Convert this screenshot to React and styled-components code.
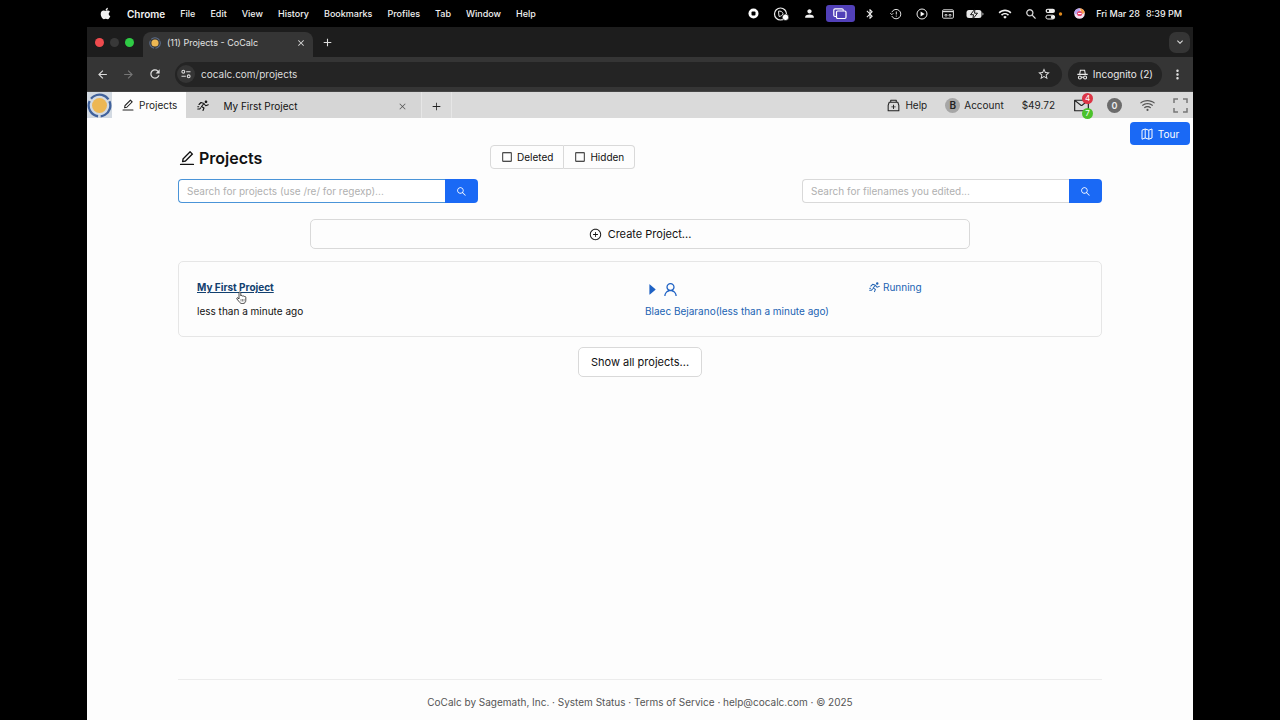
import React from "react";
import styled, { createGlobalStyle } from "styled-components";
import { FaApple } from "react-icons/fa";
import {
  AiOutlineEdit,
  AiOutlineMedicineBox,
  AiOutlineMail,
  AiOutlineWifi,
  AiOutlineSearch,
  AiOutlineUser,
  AiFillCaretRight,
  AiOutlinePlusCircle,
  AiOutlineBorder,
  AiOutlineClose,
  AiOutlinePlus,
} from "react-icons/ai";
import {
  MdArrowBack,
  MdArrowForward,
  MdRefresh,
  MdStarBorder,
  MdMoreVert,
  MdClose,
  MdAdd,
  MdPerson,
  MdBluetooth,
  MdWifi,
  MdKeyboardArrowDown,
} from "react-icons/md";

const menus = ["File", "Edit", "View", "History", "Bookmarks", "Profiles", "Tab", "Window", "Help"];

const RunIcon = ({ size }) => (
  <svg width={size} height={size} viewBox="0 0 24 24" fill="none" stroke="currentColor" strokeWidth="2.200" strokeLinecap="round" strokeLinejoin="round">
    <circle cx="18" cy="3.500" r="1.600" fill="currentColor" />
    <path d="M4 9l4-4 6 2-5 6 5 3-2 5M14.500 8l3 3.500 5-2M7.500 15.500L5.500 18H1.500M1.500 13.500h2" />
  </svg>
);

const LogoIcon = ({ size, ring }) => (
  <svg width={size} height={size} viewBox="0 0 24 24" fill="none">
    <circle cx="12" cy="12" r="7.200" fill="#edb753" />
    <circle cx="12" cy="12" r="10.400" stroke={ring} strokeWidth="2.200" strokeDasharray="19.300 2.480" strokeDashoffset="-1.240" transform="rotate(-30 12 12)" />
  </svg>
);

const StopIcon = () => (
  <svg width="11" height="11" viewBox="0 0 11 11">
    <circle cx="5.500" cy="5.500" r="5" fill="#fff" />
    <rect x="3.500" y="3.500" width="4" height="4" rx="1" fill="#000" />
  </svg>
);

const CastIcon = () => (
  <svg width="16" height="14" viewBox="0 0 16 14" fill="none" stroke="#eee">
    <circle cx="7.500" cy="7" r="6" strokeWidth="1.200" />
    <path d="M5.500 4.200c2-.500 4 .500 4.500 2.500-.700 1.700-2.200 2.700-4 2.700z" />
    <circle cx="12.500" cy="10.300" r="3.200" fill="#fff" stroke="#000" strokeWidth=".6" />
  </svg>
);

const ScreensIcon = () => (
  <svg width="14" height="12" viewBox="0 0 14 12" fill="none" stroke="#fff" strokeWidth="1.200">
    <path d="M3.500 8.500H2a1.200 1.200 0 0 1-1.200-1.200V2A1.200 1.200 0 0 1 2 .8h7a1.200 1.200 0 0 1 1.200 1.200v.8" />
    <rect x="3.500" y="3" width="9.500" height="7.500" rx="1.200" />
  </svg>
);

const TimeIcon = () => (
  <svg width="12" height="12" viewBox="0 0 12 12" fill="none" stroke="#ddd">
    <path d="M1.800 4.200A4.700 4.700 0 1 1 1.800 8" />
    <path d="M.3 5.200l1.500 1.500 1.500-1.500M6.300 3.500v3M6.300 7.600v1" />
  </svg>
);

const PlayIcon = () => (
  <svg width="12" height="12" viewBox="0 0 12 12" fill="none">
    <circle cx="6" cy="6" r="5" stroke="#eee" />
    <path d="M4.600 3.600L8.600 6l-4 2.400z" fill="#fff" />
  </svg>
);

const PanelIcon = () => (
  <svg width="12" height="10" viewBox="0 0 12 10" fill="none" stroke="#ddd">
    <rect x=".6" y=".8" width="10.800" height="8.400" rx="1" />
    <path d="M1 2.600h10" strokeWidth="1.200" />
    <path d="M3 5.500h2v1.500H3zM7 5.500h2v1.500H7z" strokeWidth=".8" />
  </svg>
);

const BatteryIcon = () => (
  <svg width="18" height="10" viewBox="0 0 18 10">
    <rect x=".5" y="1" width="15" height="8" rx="2.500" fill="#e8e8e8" />
    <path d="M16.300 3.500v3c.8-.2 1.200-.8 1.200-1.500s-.4-1.300-1.200-1.500z" fill="#aaa" />
    <path d="M9 0L4.500 5.700h3L6.800 10l4.700-5.800h-3z" fill="#e8e8e8" stroke="#000" strokeWidth=".9" />
  </svg>
);

const ControlIcon = () => (
  <svg width="18" height="12" viewBox="0 0 18 12" fill="none">
    <rect x=".6" y=".8" width="9.400" height="4.200" rx="2.100" fill="#eee" />
    <circle cx="3" cy="2.900" r="1.100" fill="#000" />
    <rect x=".9" y="7.200" width="8.800" height="3.800" rx="1.900" stroke="#eee" />
    <circle cx="7.700" cy="9.100" r="1.900" fill="#eee" />
    <circle cx="15.500" cy="6" r="1.700" fill="#e08a1e" />
  </svg>
);

const SiriIcon = () => (
  <svg width="11" height="11" viewBox="0 0 11 11">
    <circle cx="5.500" cy="5.500" r="5.300" fill="#f4dff0" />
    <path d="M5.500.2a5.300 5.300 0 0 0-5.300 5.300l3 1L6 3z" fill="#b9a4ee" />
    <path d="M6 .3a5.300 5.300 0 0 1 4.700 4.700L8 6z" fill="#f6a04c" />
    <circle cx="5.600" cy="5.500" r="2.600" fill="#ea4a73" />
    <path d="M4 5.500h3.500" stroke="#fff" />
  </svg>
);

const SiteIcon = () => (
  <svg width="10" height="10" viewBox="0 0 10 10" fill="none" stroke="#ddd" strokeWidth="1.100">
    <circle cx="2.300" cy="2.700" r="1.400" />
    <path d="M5.200 2.700H9.500M.5 7.300h4.300" />
    <circle cx="7.700" cy="7.300" r="1.400" />
  </svg>
);

const IncognitoIcon = () => (
  <svg width="11" height="11" viewBox="0 0 11 11" fill="none" stroke="#e8e8e8" strokeWidth="1.100">
    <path d="M2.700 5L3.400 1.200h4.200L8.300 5M.3 5.400h10.400" />
    <circle cx="2.900" cy="8.500" r="1.500" />
    <circle cx="8.100" cy="8.500" r="1.500" />
    <path d="M4.400 8.200h2.200" />
  </svg>
);

const ExpandIcon = () => (
  <svg width="15" height="15" viewBox="0 0 15 15" fill="none" stroke="#777" strokeWidth="1.500">
    <path d="M1 5V1h4M10 1h4v4M14 10v4h-4M5 14H1v-4" />
  </svg>
);

const MapIcon = () => (
  <svg width="12" height="12" viewBox="0 0 12 12" fill="none" stroke="#fff" strokeLinejoin="round">
    <path d="M1 2.200L4.200 1v9L1 11.200zM4.200 1l3.600 1.200v9L4.200 10M7.800 2.200L11 1v9l-3.200 1.200" />
  </svg>
);

const HandIcon = () => (
  <svg width="11" height="13" viewBox="0 0 11 13">
    <path
      d="M3 8V1.800C3 .5 4.800.5 4.800 1.800V5c.3-.7 1.600-.6 1.700.2.400-.6 1.500-.4 1.600.4.600-.4 1.700-.2 1.700.7v2.900c0 2-1 3.300-3 3.300H6c-1.300 0-2-.6-2.700-1.600L.9 8c-.6-1 .5-1.700 1.200-1z"
      fill="#fff"
      stroke="#222"
      strokeWidth=".8"
    />
    <path d="M5 8v2.500M6.500 8v2.500M8 8v2.500" stroke="#444" strokeWidth=".6" />
  </svg>
);

function MenuBar() {
  return (
    <Menu>
      <MenuItem $bold aria-label="Apple">
        <FaApple size={13} />
      </MenuItem>
      <MenuItem $bold>Chrome</MenuItem>
      {menus.map((m) => (
        <MenuItem key={m}>{m}</MenuItem>
      ))}
      <Tray>
        <TrayCell $w={28}><StopIcon /></TrayCell>
        <TrayCell $w={28}><CastIcon /></TrayCell>
        <TrayCell $w={28}><MdPerson size={13} /></TrayCell>
        <TrayCell $w={34}>
          <Sharing><ScreensIcon /></Sharing>
        </TrayCell>
        <TrayCell $w={26}><MdBluetooth size={12} /></TrayCell>
        <TrayCell $w={25}><TimeIcon /></TrayCell>
        <TrayCell $w={27}><PlayIcon /></TrayCell>
        <TrayCell $w={25}><PanelIcon /></TrayCell>
        <TrayCell $w={30}><BatteryIcon /></TrayCell>
        <TrayCell $w={30}><MdWifi size={14} /></TrayCell>
        <TrayCell $w={21}><SearchIcon size={12} /></TrayCell>
        <TrayCell $w={26}><ControlIcon /></TrayCell>
        <TrayCell $w={24}><SiriIcon /></TrayCell>
      </Tray>
      <Clock>
        <span>Fri Mar 28</span>
        <span>8:39 PM</span>
      </Clock>
    </Menu>
  );
}

function Browser() {
  return (
    <>
      <TabStrip>
        <Lights>
          <Light $color="#ee4b4e" />
          <Light $color="#383838" />
          <Light $color="#2fcb45" />
        </Lights>
        <ChromeTab>
          <LogoIcon size={12} ring="#5a6a86" />
          <ChromeTitle>(11) Projects - CoCalc</ChromeTitle>
          <DarkBtn aria-label="Close tab"><MdClose size={10} /></DarkBtn>
        </ChromeTab>
        <DarkBtn aria-label="New tab"><MdAdd size={13} /></DarkBtn>
        <TabSearch aria-label="Search tabs"><MdKeyboardArrowDown size={12} /></TabSearch>
      </TabStrip>
      <Toolbar>
        <NavBtns>
          <DarkBtn aria-label="Back"><MdArrowBack size={13} /></DarkBtn>
          <DarkBtn $dim aria-label="Forward"><MdArrowForward size={13} /></DarkBtn>
          <DarkBtn aria-label="Reload"><MdRefresh size={14} /></DarkBtn>
        </NavBtns>
        <Omnibox>
          <SiteInfo aria-label="Site information"><SiteIcon /></SiteInfo>
          <Url aria-label="Address" defaultValue="cocalc.com/projects" />
          <DarkBtn aria-label="Bookmark"><MdStarBorder size={14} /></DarkBtn>
        </Omnibox>
        <Incognito>
          <IncognitoIcon />
          Incognito (2)
        </Incognito>
        <DarkBtn aria-label="More"><MdMoreVert size={15} /></DarkBtn>
      </Toolbar>
    </>
  );
}

function TopNav() {
  return (
    <Nav>
      <LogoBox href="#" aria-label="CoCalc"><LogoIcon size={25} ring="#41629c" /></LogoBox>
      <ProjectsTab>
        <AiOutlineEdit size={14} />
        Projects
      </ProjectsTab>
      <ProjectTab>
        <RunIcon size={12} />
        <ProjectName>My First Project</ProjectName>
        <PlainBtn aria-label="Close project"><AiOutlineClose size={9} color="#555" /></PlainBtn>
      </ProjectTab>
      <AddTab aria-label="Add tab"><AiOutlinePlus size={11} /></AddTab>
      <NavRight>
        <PlainBtn><AiOutlineMedicineBox size={15} />Help</PlainBtn>
        <PlainBtn><Avatar>B</Avatar>Account</PlainBtn>
        <PlainBtn>$49.72</PlainBtn>
        <NavIcons>
          <MailBtn aria-label="Messages">
            <AiOutlineMail size={17} />
            <Badge $color="#dc3545" $top>4</Badge>
            <Badge $color="#4bc22b">7</Badge>
          </MailBtn>
          <PlainBtn aria-label="Notifications"><Avatar $dark>0</Avatar></PlainBtn>
          <PlainBtn aria-label="Connection"><AiOutlineWifi size={17} color="#555" /></PlainBtn>
          <PlainBtn aria-label="Fullscreen"><ExpandIcon /></PlainBtn>
        </NavIcons>
      </NavRight>
    </Nav>
  );
}

function Search({ label, active }) {
  return (
    <SearchBox>
      <SearchInput type="text" placeholder={label} aria-label={label} $active={active} />
      <SearchBtn aria-label="Search"><AiOutlineSearch size={11} /></SearchBtn>
    </SearchBox>
  );
}

function App() {
  return (
    <Screen>
      <Global />
      <MenuBar />
      <Browser />
      <TopNav />
      <Page>
        <TourRow>
          <TourBtn><MapIcon />Tour</TourBtn>
        </TourRow>
        <Content>
          <Columns>
            <Title><AiOutlineEdit size={18} />Projects</Title>
            <Filters>
              <FilterBtn><AiOutlineBorder size={12} />Deleted</FilterBtn>
              <FilterBtn><AiOutlineBorder size={12} />Hidden</FilterBtn>
            </Filters>
          </Columns>
          <SearchRow>
            <Search label="Search for projects (use /re/ for regexp)..." active />
            <Search label="Search for filenames you edited..." />
          </SearchRow>
          <CreateBtn><AiOutlinePlusCircle size={13} />Create Project...</CreateBtn>
          <Card>
            <Cell>
              <NameLink href="#">
                My First Project
                <Pointer><HandIcon /></Pointer>
              </NameLink>
              <span>less than a minute ago</span>
            </Cell>
            <Cell>
              <UserRow>
                <AiFillCaretRight size={15} />
                <AiOutlineUser size={17} />
              </UserRow>
              <CardLink href="#">Blaec Bejarano(less than a minute ago)</CardLink>
            </Cell>
            <Cell>
              <CardLink href="#"><RunIcon size={11} />Running</CardLink>
            </Cell>
          </Card>
          <ShowAll>Show all projects...</ShowAll>
          <Footer>
            <a href="#">CoCalc by Sagemath, Inc.</a> · <a href="#">System Status</a> ·{" "}
            <a href="#">Terms of Service</a> · <a href="#">help@cocalc.com</a> · © 2025
          </Footer>
        </Content>
      </Page>
    </Screen>
  );
}

const Global = createGlobalStyle`
  * {
    box-sizing: border-box;
  }
  body {
    margin: 0;
    background: #000;
    font-family: Inter, "Liberation Sans", sans-serif;
    font-size: 10px;
  }
  button, input {
    font: inherit;
    color: inherit;
    margin: 0;
    padding: 0;
    border: 0;
    background: none;
  }
  a {
    color: inherit;
    text-decoration: none;
  }
  svg {
    flex: none;
  }
`;

const Screen = styled.div`
  display: flex;
  flex-direction: column;
  min-height: 100vh;
  padding: 0 87px;
`;

const Menu = styled.header`
  display: flex;
  align-items: center;
  height: 27px;
  padding: 0 11px 0 12px;
  gap: 15px;
  color: #f2f2f2;
  font-size: 9px;
`;

const MenuItem = styled.button`
  display: flex;
  white-space: nowrap;
  font-size: ${(props) => (props.$bold ? 10 : 9)}px;
  font-weight: ${(props) => (props.$bold ? 600 : 500)};
`;

const Tray = styled.div`
  display: flex;
  align-items: center;
  margin-left: auto;
  margin-right: -10px;
`;

const TrayCell = styled.div`
  display: flex;
  justify-content: center;
  width: ${(props) => props.$w}px;
`;

const SearchIcon = styled(AiOutlineSearch)`
  stroke: #f2f2f2;
  stroke-width: 24px;
`;

const Sharing = styled.div`
  display: flex;
  align-items: center;
  justify-content: center;
  width: 29px;
  height: 17px;
  border-radius: 3px;
  background: #5140b8;
`;

const Clock = styled.div`
  display: flex;
  gap: 6px;
  white-space: nowrap;
  font-weight: 500;
`;

const DarkBtn = styled.button`
  display: flex;
  align-items: center;
  color: ${(props) => (props.$dim ? "#777" : "#ddd")};
`;

const TabStrip = styled.div`
  display: flex;
  align-items: center;
  height: 30px;
  padding: 0 3px 0 8px;
  background: #1d1d1d;
`;

const Lights = styled.div`
  display: flex;
  gap: 6px;
  margin-right: 9px;
`;

const Light = styled.span`
  width: 9px;
  height: 9px;
  border-radius: 50%;
  background: ${(props) => props.$color};
`;

const ChromeTab = styled.div`
  display: flex;
  align-items: center;
  align-self: flex-end;
  width: 170px;
  height: 25px;
  padding: 0 7px 4px 6px;
  gap: 6px;
  margin-right: 8px;
  border-radius: 8px 8px 0 0;
  background: #353535;
`;

const ChromeTitle = styled.span`
  flex: 1;
  color: #e3e3e3;
  font-size: 9px;
  white-space: nowrap;
`;

const TabSearch = styled(DarkBtn)`
  justify-content: center;
  width: 21px;
  height: 21px;
  margin-left: auto;
  border-radius: 7px;
  background: #353535;
`;

const Toolbar = styled.div`
  display: flex;
  align-items: center;
  height: 35px;
  padding: 0 8px 0 9px;
  background: #353535;
  border-bottom: 1px solid #454545;
`;

const NavBtns = styled.div`
  display: flex;
  gap: 13px;
  margin-right: 13px;
`;

const Omnibox = styled.div`
  display: flex;
  flex: 1;
  align-items: center;
  height: 25px;
  padding: 0 11px 0 2px;
  margin-right: 6px;
  border-radius: 13px;
  background: #242424;
`;

const SiteInfo = styled.button`
  display: flex;
  align-items: center;
  justify-content: center;
  width: 18px;
  height: 18px;
  margin-right: 6px;
  border-radius: 50%;
  background: #353535;
`;

const Url = styled.input`
  flex: 1;
  color: #dedede;
  outline: none;
`;

const Incognito = styled.button`
  display: flex;
  align-items: center;
  gap: 5px;
  height: 25px;
  padding: 0 9px;
  margin-right: 8px;
  border-radius: 13px;
  background: #242424;
  color: #e8e8e8;
  white-space: nowrap;
`;

const Nav = styled.nav`
  display: flex;
  height: 26px;
  background: #dadada;
  color: #222;
`;

const LogoBox = styled.a`
  display: flex;
  align-items: center;
  width: 25px;
  background: #d3dae2;
`;

const ProjectsTab = styled.button`
  display: flex;
  align-items: center;
  gap: 4px;
  padding: 0 9px;
  background: #fdfdfd;
`;

const ProjectTab = styled.div`
  display: flex;
  align-items: center;
  width: 236px;
  padding: 2px 14px 0 11px;
  gap: 14px;
  border-right: 1px solid #e6e6e6;
  background: #d6d6d6;
  color: #111;
`;

const ProjectName = styled.span`
  flex: 1;
  white-space: nowrap;
`;

const PlainBtn = styled.button`
  display: flex;
  align-items: center;
  gap: 4px;
`;

const AddTab = styled(PlainBtn)`
  justify-content: center;
  width: 30px;
  padding-top: 2px;
  border-right: 1px solid #e6e6e6;
`;

const NavRight = styled.div`
  display: flex;
  align-items: center;
  gap: 18px;
  margin-left: auto;
  padding-right: 5px;
`;

const NavIcons = styled.div`
  display: flex;
  align-items: center;
  gap: 17px;
`;

const Avatar = styled.span`
  display: flex;
  align-items: center;
  justify-content: center;
  width: 15px;
  height: 15px;
  border-radius: 50%;
  font-size: ${(props) => (props.$dark ? 9 : 10)}px;
  font-weight: 600;
  color: ${(props) => (props.$dark ? "#eee" : "#222")};
  background: ${(props) => (props.$dark ? "#6b6b6b" : "#a6a6a6")};
`;

const MailBtn = styled(PlainBtn)`
  position: relative;
`;

const Badge = styled.span`
  position: absolute;
  left: 9px;
  top: ${(props) => (props.$top ? -4 : 11)}px;
  width: 11px;
  height: 11px;
  border-radius: 50%;
  line-height: 11px;
  text-align: center;
  font-size: 8px;
  color: #fff;
  background: ${(props) => props.$color};
`;

const Page = styled.main`
  display: flex;
  flex-direction: column;
  flex: 1;
  background: #fdfdfd;
  color: #111;
`;

const TourRow = styled.div`
  display: flex;
  justify-content: flex-end;
  padding: 4px 3px 0;
`;

const TourBtn = styled.button`
  display: flex;
  align-items: center;
  justify-content: center;
  gap: 5px;
  width: 60px;
  height: 23px;
  border-radius: 4px;
  background: #1a69f5;
  color: #fff;
`;

const Content = styled.div`
  display: flex;
  flex-direction: column;
  flex: 1;
  padding: 0 91px;
`;

const Columns = styled.div`
  display: grid;
  grid-template-columns: repeat(3, 1fr);
  column-gap: 12px;
`;

const Title = styled.h1`
  display: flex;
  align-items: center;
  gap: 3px;
  margin: 0;
  padding-top: 2px;
  font-size: 16px;
  font-weight: 600;
  line-height: 22px;
`;

const Filters = styled.div`
  display: flex;
`;

const FilterBtn = styled.button`
  display: flex;
  align-items: center;
  gap: 4px;
  height: 24px;
  padding: 0 10px;
  border: 1px solid #d9d9d9;
  border-radius: 4px 0 0 4px;

  & + & {
    border-left: 0;
    border-radius: 0 4px 4px 0;
  }
`;

const SearchRow = styled(Columns)`
  margin-top: 10px;

  & > :last-child {
    grid-column: 3;
  }
`;

const SearchBox = styled.div`
  display: flex;
  height: 24px;
`;

const SearchInput = styled.input`
  flex: 1;
  min-width: 0;
  padding: 0 8px;
  border: 1px solid ${(props) => (props.$active ? "#4a94d8" : "#d9d9d9")};
  border-right: 0;
  border-radius: 4px 0 0 4px;
  background: #fff;
  outline: none;

  &::placeholder {
    color: #b0b0b0;
    opacity: 1;
  }
`;

const SearchBtn = styled.button`
  display: flex;
  align-items: center;
  justify-content: center;
  width: 33px;
  border-radius: 0 4px 4px 0;
  background: #1a69f5;
  color: #fff;
`;

const CreateBtn = styled.button`
  display: flex;
  align-items: center;
  justify-content: center;
  align-self: center;
  gap: 6px;
  width: 100%;
  max-width: 660px;
  height: 30px;
  margin-top: 16px;
  border: 1px solid #d9d9d9;
  border-radius: 5px;
  font-size: 11px;
`;

const Card = styled.section`
  display: grid;
  grid-template-columns: 2fr 1fr 1fr;
  margin-top: 12px;
  padding: 15px 8px 15px 18px;
  border: 1px solid #e6e6e6;
  border-radius: 5px;
`;

const Cell = styled.div`
  display: flex;
  flex-direction: column;
  align-items: flex-start;
  gap: 4px;
  line-height: 20px;
`;

const NameLink = styled.a`
  position: relative;
  color: #12406f;
  font-weight: 700;
  text-decoration: underline;
`;

const Pointer = styled.span`
  position: absolute;
  left: 39px;
  top: 14px;
  display: flex;
`;

const CardLink = styled.a`
  display: flex;
  align-items: center;
  gap: 3px;
  color: #2163b3;
  white-space: nowrap;
`;

const UserRow = styled.div`
  display: flex;
  align-items: center;
  gap: 2px;
  height: 20px;
  padding-top: 5px;
  color: #1f62c4;
`;

const ShowAll = styled.button`
  align-self: center;
  height: 30px;
  margin-top: 10px;
  padding: 0 12px;
  border: 1px solid #d9d9d9;
  border-radius: 5px;
  background: #fff;
  font-size: 11px;
`;

const Footer = styled.footer`
  margin-top: auto;
  padding: 12px 0 8px;
  border-top: 1px solid #ececec;
  color: #555;
  line-height: 20px;
  text-align: center;
`;

export default App;
